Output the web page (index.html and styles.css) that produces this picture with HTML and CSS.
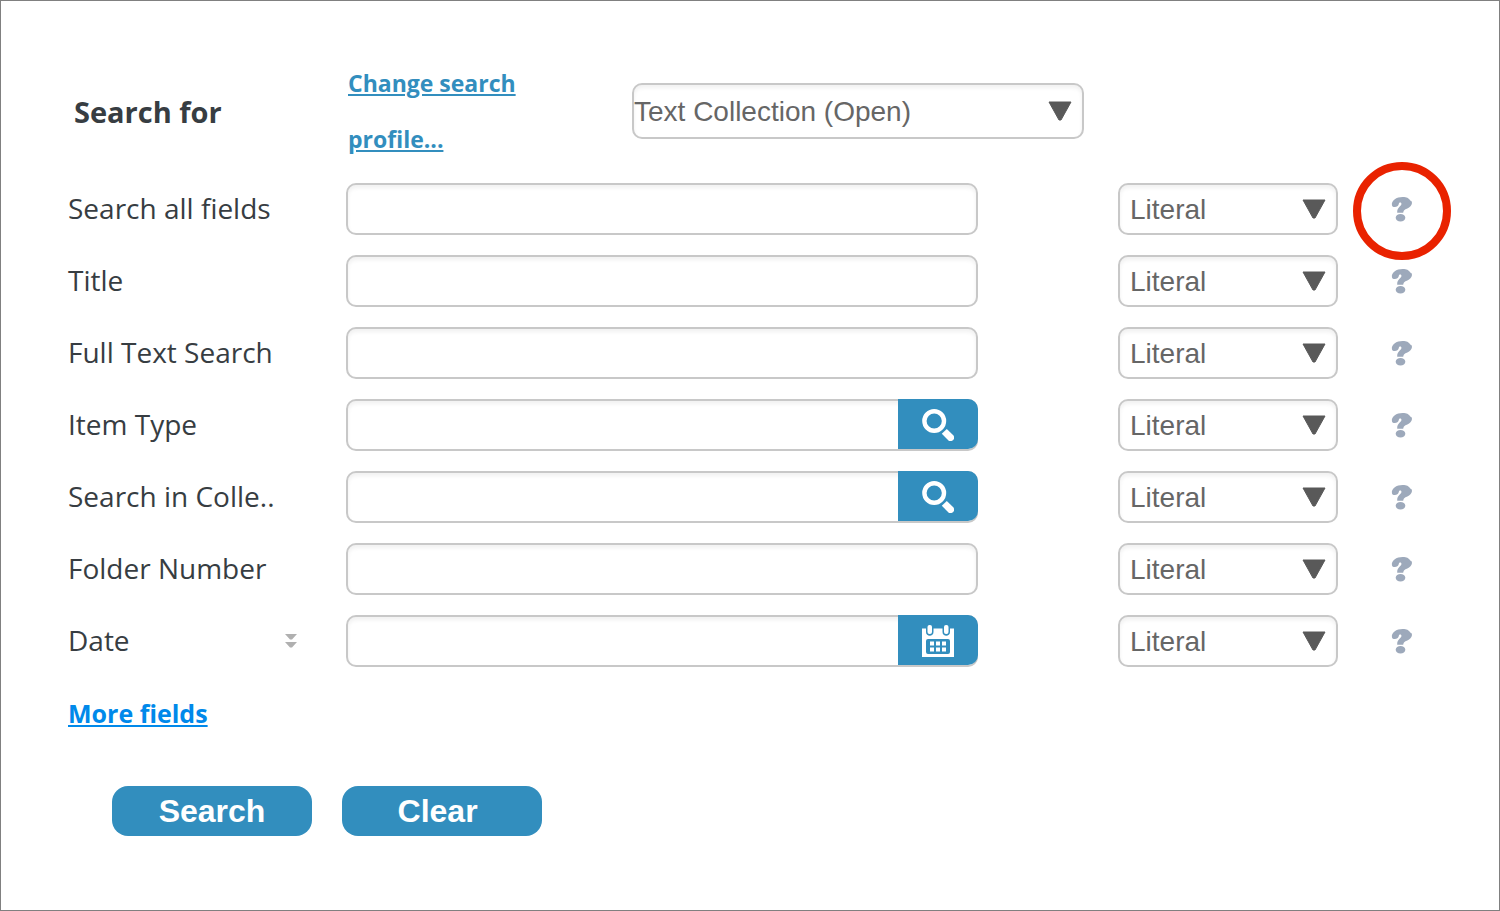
FILE: index.html
```
<!doctype html>
<html lang="en">
  <head>
    <meta charset="UTF-8" />
    <meta name="viewport" content="width=device-width, initial-scale=1.0" />
    <title>Search</title>
    <link rel="stylesheet" href="styles.css">
  </head>
  <body>
    <!-- Shared icons -->
    <svg class="sprite" aria-hidden="true">
      <symbol id="icon-help" viewBox="0 0 24 28">
        <path d="M2 10.500C1.400 8 2.500 6 4.500 4.500C7.500 2 12 1.600 15.500 2.200C18.500 2.800 19.500 4.200 20.200 5.500C22 5.800 22.500 7.800 21.500 9.800C20.500 12.200 18 13.200 15.500 14.200C13.800 15 13.500 16 13.200 17.800H7.200C7 15 8 13.200 9.500 11.800C11 10.400 12 9 11.200 7.900C10.300 7.200 9 7.700 8.800 9C8.500 11 6.800 12 4.800 12C3.200 12 2.400 11.500 2 10.500Z" />
        <ellipse cx="10.500" cy="22.800" rx="4.800" ry="3.800" />
      </symbol>
      <symbol id="icon-search" viewBox="0 0 32 32">
        <circle cx="12.200" cy="12" r="9.800" fill="none" stroke="currentColor" stroke-width="4.400" />
        <path d="M19.800 24.800L24.800 20L31.500 26.500C32.600 28 32.200 31.600 29.500 31.900H27Z" />
      </symbol>
      <symbol id="icon-calendar" viewBox="0 0 32 32">
        <path fill-rule="evenodd" d="M0 3.500H4V7C4 12 11.500 12 11.500 7V3.500H20.500V7C20.500 12 28 12 28 7V3.500H32V32H0ZM6 14Q4 14 4 16V27Q4 29 6 29H26Q28 29 28 27V16Q28 14 26 14Z" />
        <rect x="5.500" y="0" width="4.500" height="9" rx="2" />
        <rect x="22" y="0" width="4.500" height="9" rx="2" />
        <path d="M8 16.500h4v4h-4zM14 16.500h4v4h-4zM20 16.500h4v4h-4zM8 22.500h4v4h-4zM14 22.500h4v4h-4zM20 22.500h4v4h-4z" />
      </symbol>
    </svg>

    <form class="search-form" id="searchForm">
      <div class="profile-row">
        <label class="profile-label" for="profile">Search for</label>
        <a class="profile-link" href="#">Change search profile...</a>
        <select class="select profile-select" id="profile">
          <option>Text Collection (Open)</option>
        </select>
      </div>

      <div class="field-row">
        <label class="field-label" for="allFields">Search all fields</label>
        <div class="field"><input type="text" id="allFields" /></div>
        <select class="select" aria-label="Search all fields match type">
          <option>Literal</option>
        </select>
        <a class="help highlighted" href="#" aria-label="Help"><svg><use href="#icon-help" /></svg></a>
      </div>

      <div class="field-row">
        <label class="field-label" for="title">Title</label>
        <div class="field"><input type="text" id="title" /></div>
        <select class="select" aria-label="Title match type">
          <option>Literal</option>
        </select>
        <a class="help" href="#" aria-label="Help"><svg><use href="#icon-help" /></svg></a>
      </div>

      <div class="field-row">
        <label class="field-label" for="fullText">Full Text Search</label>
        <div class="field"><input type="text" id="fullText" /></div>
        <select class="select" aria-label="Full text match type">
          <option>Literal</option>
        </select>
        <a class="help" href="#" aria-label="Help"><svg><use href="#icon-help" /></svg></a>
      </div>

      <div class="field-row">
        <label class="field-label" for="itemType">Item Type</label>
        <div class="field">
          <input type="text" id="itemType" />
          <button type="button" class="field-btn" aria-label="Browse item types"><svg><use href="#icon-search" /></svg></button>
        </div>
        <select class="select" aria-label="Item type match type">
          <option>Literal</option>
        </select>
        <a class="help" href="#" aria-label="Help"><svg><use href="#icon-help" /></svg></a>
      </div>

      <div class="field-row">
        <label class="field-label" for="collection">Search in Colle..</label>
        <div class="field">
          <input type="text" id="collection" />
          <button type="button" class="field-btn" aria-label="Browse collections"><svg><use href="#icon-search" /></svg></button>
        </div>
        <select class="select" aria-label="Collection match type">
          <option>Literal</option>
        </select>
        <a class="help" href="#" aria-label="Help"><svg><use href="#icon-help" /></svg></a>
      </div>

      <div class="field-row">
        <label class="field-label" for="folder">Folder Number</label>
        <div class="field"><input type="text" id="folder" /></div>
        <select class="select" aria-label="Folder number match type">
          <option>Literal</option>
        </select>
        <a class="help" href="#" aria-label="Help"><svg><use href="#icon-help" /></svg></a>
      </div>

      <div class="field-row">
        <div class="label-group">
          <label class="field-label" for="date">Date</label>
          <button type="button" class="expand-btn" aria-label="Expand date range">
            <svg viewBox="0 0 12 16"><path d="M0 1H12L7 6.500H5ZM0 9H12L7 14.500H5Z" /></svg>
          </button>
        </div>
        <div class="field">
          <input type="text" id="date" />
          <button type="button" class="field-btn" aria-label="Pick a date"><svg><use href="#icon-calendar" /></svg></button>
        </div>
        <select class="select" aria-label="Date match type">
          <option>Literal</option>
        </select>
        <a class="help" href="#" aria-label="Help"><svg><use href="#icon-help" /></svg></a>
      </div>

      <div class="more">
        <a class="more-link" href="#">More fields</a>
      </div>

      <div class="actions">
        <button type="submit" class="action-btn">Search</button>
        <button type="reset" class="action-btn">Clear&nbsp;</button>
      </div>
    </form>
  </body>
</html>
```
FILE: styles.css
```
* {
  box-sizing: border-box;
  margin: 0;
  padding: 0;
}

body {
  min-height: 100vh;
  border: 1px solid #808080;
  background-color: #fff;
  color: #373d42;
  font-family: "Open Sans", "Noto Sans", sans-serif;
  font-size: 28px;
}

.sprite {
  position: absolute;
  width: 0;
  height: 0;
}

.search-form {
  padding: 54px 33px 54px 67px;
}

/* Profile row */
.profile-row {
  display: grid;
  grid-template-columns: 280px 284px minmax(0, 452px);
  align-items: center;
  margin-bottom: 16px;
}

.profile-label {
  padding-left: 6px;
  font-size: 29px;
  font-weight: 700;
}

.profile-link {
  max-width: 200px;
  color: #328ebe;
  font-size: 23px;
  font-weight: 700;
  line-height: 56px;
}

.select {
  width: 100%;
  height: 52px;
  padding: 0 40px 0 10px;
  border: 2px solid #c8c8c8;
  border-radius: 10px;
  appearance: none;
  background: #fff url("data:image/svg+xml,%3Csvg xmlns='http://www.w3.org/2000/svg' width='24' height='20'%3E%3Cpath d='M1 1H23L13 19H11Z' fill='%23595959' stroke='%23595959' stroke-linejoin='round'/%3E%3C/svg%3E") no-repeat right 10px center;
  box-shadow: inset 0 3px 4px rgba(0, 0, 0, 0.06);
  color: #666;
  font-family: "Liberation Sans", Arial, sans-serif;
  font-size: 28px;
}

.profile-select {
  height: 56px;
  padding-left: 0;
}

/* Field rows */
.field-row {
  display: grid;
  grid-template-columns: 278px minmax(0, 1fr) 220px 128px;
  align-items: center;
  margin-bottom: 20px;
}

.field-label {
  padding-bottom: 2px;
}

.label-group {
  display: flex;
  align-items: center;
  justify-content: space-between;
  padding-right: 49px;
}

.expand-btn {
  display: flex;
  border: none;
  background: none;
  cursor: pointer;
}

.expand-btn svg {
  width: 12px;
  height: 16px;
  fill: #b0b0b0;
}

.field {
  display: flex;
  height: 52px;
  margin-right: 140px;
  border: 2px solid #c8c8c8;
  border-radius: 10px;
  box-shadow: inset 0 3px 4px rgba(0, 0, 0, 0.06);
}

.field input {
  flex: 1;
  min-width: 0;
  padding: 0 10px;
  border: none;
  outline: none;
  background: none;
  color: #666;
  font-family: "Liberation Sans", Arial, sans-serif;
  font-size: 28px;
}

.field-btn {
  display: flex;
  align-items: center;
  justify-content: center;
  width: 80px;
  margin: -2px -2px 0 0;
  padding-top: 2px;
  border: none;
  border-radius: 0 10px 10px 0;
  background-color: #328ebe;
  color: #fff;
  cursor: pointer;
}

.field-btn svg {
  width: 32px;
  height: 32px;
  fill: currentColor;
}

.help {
  position: relative;
  display: flex;
  justify-content: center;
}

.help svg {
  width: 24px;
  height: 28px;
  fill: #9da9bb;
}

/* Red ring around the help icon */
.highlighted::after {
  content: "";
  position: absolute;
  top: 50%;
  left: 50%;
  box-sizing: border-box;
  width: 98px;
  height: 98px;
  border: 8px solid #e92200;
  border-radius: 50%;
  transform: translate(-50%, -47px);
  pointer-events: none;
}

.more {
  line-height: 50px;
}

.more-link {
  color: #0089ea;
  font-size: 25px;
  font-weight: 700;
}

/* Buttons */
.actions {
  display: flex;
  gap: 30px;
  margin-top: 48px;
  padding-left: 44px;
}

.action-btn {
  width: 200px;
  height: 50px;
  border: none;
  border-radius: 16px;
  background-color: #328ebe;
  color: #fff;
  font-family: "Liberation Sans", Arial, sans-serif;
  font-size: 32px;
  font-weight: 700;
  cursor: pointer;
}

.action-btn:hover,
.field-btn:hover {
  background-color: #2a7ba6;
}
```
